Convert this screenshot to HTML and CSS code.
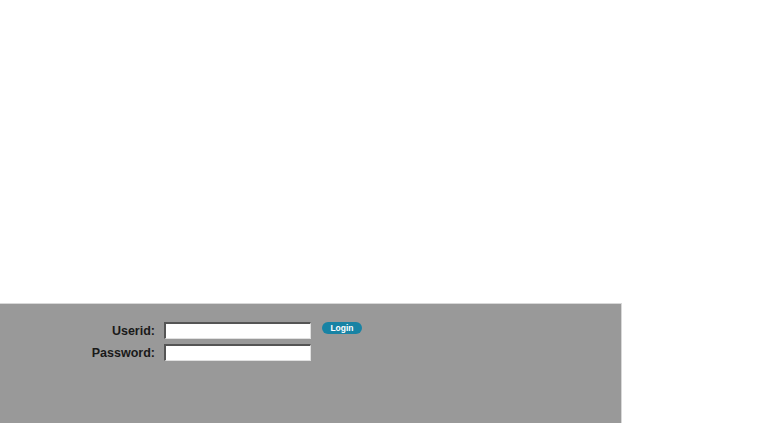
FILE: index.html
```html
<!DOCTYPE html>
<html>
<head>
<meta charset="utf-8">
<link rel="stylesheet" href="styles.css">
</head>
<body>
<div class="spacer"></div>
<div class="panel">
  <form class="login">
    <label class="lbl" for="u">Userid:</label>
    <input class="field" id="u" type="text">
    <button class="btn" type="button">Login</button>
    <label class="lbl" for="p">Password:</label>
    <input class="field" id="p" type="password">
  </form>
</div>
</body>
</html>
```
FILE: styles.css
```css
html, body {
  margin: 0;
  padding: 0;
  background: #ffffff;
  font-family: "Liberation Sans", Arial, sans-serif;
}
.spacer {
  height: 303px;
}
.panel {
  width: 622px;
  height: 120px;
  background: #999999;
  border-top: 1px solid #d8d8d8;
  border-right: 1px solid #d8d8d8;
  padding-top: 18px;
  box-sizing: border-box;
}
.login {
  display: grid;
  grid-template-columns: 155px 147px 40px;
  grid-auto-rows: 17px;
  column-gap: 9px;
  row-gap: 5px;
  align-items: center;
}
.lbl {
  text-align: right;
  font-size: 12.5px;
  font-weight: bold;
  color: #1a1a1a;
}
.field {
  width: 147px;
  height: 17px;
  box-sizing: border-box;
  margin: 0;
  padding: 0 2px;
  background: #ffffff;
  border-style: solid;
  border-width: 2px 1px 1px 2px;
  border-color: #555555 #e0e0e0 #e0e0e0 #555555;
}
.btn {
  align-self: start;
  margin: 0 0 0 2px;
  width: 40px;
  height: 12px;
  padding: 0;
  border: none;
  border-radius: 6px;
  background: #1883a4;
  color: #ffffff;
  font-family: "Liberation Sans", Arial, sans-serif;
  font-size: 8.5px;
  font-weight: bold;
  line-height: 12px;
}
```
